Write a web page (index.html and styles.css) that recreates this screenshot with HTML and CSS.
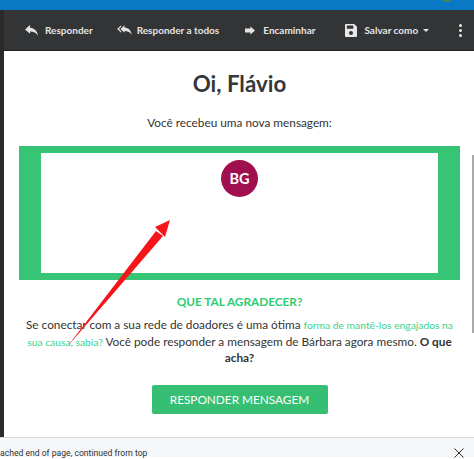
FILE: index.html
```html
<!DOCTYPE html>
<html lang="pt-BR">
<head>
  <meta charset="UTF-8" />
  <title>Oi, Flávio</title>
  <link rel="stylesheet" href="styles.css">
</head>
<body>
  <div class="topbar"><span class="account"></span></div>

  <div class="viewer">
    <div class="toolbar">
      <span class="tool tool-reply">
        <svg class="icon" width="13" height="11" viewBox="0 0 18 15"><path d="M0 6 7 0v3.600c6 .4 10 4.400 11 11-2.500-3.800-6-5.600-11-5.600V12z" fill="#e4e4e4"/></svg>
        Responder
      </span>
      <span class="tool tool-replyall">
        <svg class="icon" width="15" height="10" viewBox="0 0 22 15"><path d="M0 6 6 .5v2.300L2.800 6 6 9.200v2.300z" fill="#e4e4e4"/><path d="M5 6 11 .5v3.100c6 .4 10 4.400 11 11-2.500-3.800-6-5.600-11-5.600v2.500z" fill="#e4e4e4"/></svg>
        Responder a todos
      </span>
      <span class="tool tool-forward">
        <svg class="icon" width="10" height="9" viewBox="0 0 15 12"><path d="M0 3h8V0l7 6-7 6V9H0z" fill="#e4e4e4"/></svg>
        Encaminhar
      </span>
      <span class="tool tool-save">
        <svg class="icon" width="12" height="13" viewBox="0 0 13 14"><path fill-rule="evenodd" d="M1 0h9l3 3v10a1 1 0 0 1-1 1H1a1 1 0 0 1-1-1V1a1 1 0 0 1 1-1zM2 1.500V5h7V1.500zM6.500 7.500a2.200 2.200 0 1 0 0 4.400 2.200 2.200 0 0 0 0-4.400z" fill="#e8e8e8"/></svg>
        Salvar como
        <span class="caret"></span>
      </span>
      <span class="dots"><i></i><i></i><i></i></span>
    </div>

    <div class="mail">
      <h1>Oi, Flávio</h1>
      <p class="intro">Você recebeu uma nova mensagem:</p>

      <div class="message-box">
        <div class="avatar">BG</div>
      </div>

      <h2>QUE TAL AGRADECER?</h2>
      <p class="copy">Se conectar com a sua rede de doadores é uma ótima <a>forma de mantê-los engajados na sua causa, sabia?</a> Você pode responder a mensagem de Bárbara agora mesmo. <b>O que acha?</b></p>

      <div class="cta-row"><span class="cta">RESPONDER MENSAGEM</span></div>
    </div>
    <div class="scroll-thumb"></div>
  </div>

  <div class="findbar">
    <span class="find-text">ached end of page, continued from top</span>
    <svg width="10" height="10" viewBox="0 0 11 11"><path d="M.5.500l10 10M10.500.500l-10 10" stroke="#333" stroke-width="1.100" fill="none"/></svg>
  </div>

  <!-- annotation drawn on top of the screenshot -->
  <svg class="arrow" width="474" height="459" viewBox="0 0 474 459">
    <path d="M67 347 156 231 163 236z" fill="#f5141a"/>
    <path d="M170 220 155 227 165 237z" fill="#f5141a"/>
  </svg>
</body>
</html>
```

FILE: styles.css
```css
html, body {
  margin: 0;
  padding: 0;
}
body {
  position: relative;
  width: 474px;
  height: 459px;
  overflow: hidden;
  background: #fff;
  font-family: Lato, "Open Sans", sans-serif;
  color: #333;
}
.topbar {
  position: relative;
  height: 10px;
  background: #0a78c4;
}
.account {
  position: absolute;
  left: 441px;
  top: -10px;
  width: 12px;
  height: 12px;
  border-radius: 50%;
  background: #4c8a4a;
}
.viewer {
  position: relative;
  height: 427px;
  border-left: 4px solid #2a2a2a;
  box-sizing: border-box;
  overflow: hidden;
}
.toolbar {
  display: flex;
  align-items: center;
  height: 41px;
  background: #333435;
  border-bottom: 1px solid #222;
  box-sizing: border-box;
  color: #e4e4e4;
  font-size: 10px;
  font-weight: 700;
  white-space: nowrap;
}
.tool {
  display: flex;
  align-items: center;
}
.tool-reply { margin-left: 21px; gap: 7px; }
.tool-replyall { margin-left: 24px; gap: 5px; }
.tool-forward { margin-left: 26px; gap: 8px; }
.tool-save { margin-left: 30px; gap: 7px; }
.caret {
  width: 0;
  height: 0;
  margin-left: -2px;
  border-left: 3.500px solid transparent;
  border-right: 3.500px solid transparent;
  border-top: 3.500px solid #e4e4e4;
}
.dots {
  display: flex;
  flex-direction: column;
  gap: 2px;
  margin-left: 30px;
}
.dots i {
  width: 3px;
  height: 3px;
  border-radius: 50%;
  background: #e8e8e8;
}
.mail {
  display: flex;
  flex-direction: column;
  align-items: center;
  width: 471px;
  padding-top: 18px;
  box-sizing: border-box;
  text-align: center;
}
h1 {
  margin: 0;
  font-size: 22.300px;
  line-height: 29px;
  font-weight: 700;
  color: #34373b;
}
.intro {
  margin: 16px 0 0;
  font-size: 11.800px;
  line-height: 17px;
}
.message-box {
  display: flex;
  justify-content: center;
  width: 441px;
  height: 134px;
  margin: 15px 0 0;
  padding-top: 7px;
  border: 7px solid #38c475;
  border-left-width: 22px;
  border-right-width: 22px;
  box-sizing: border-box;
}
.avatar {
  width: 37px;
  height: 37px;
  border-radius: 50%;
  background: #a0104f;
  color: #fff;
  font-size: 14.500px;
  font-weight: 700;
  line-height: 37px;
  text-align: center;
}
h2 {
  margin: 14px 0 0;
  font-size: 11.800px;
  line-height: 16px;
  font-weight: 700;
  color: #2ecc71;
}
.copy {
  width: 430px;
  margin: 7px 0 0;
  font-size: 11.800px;
  line-height: 15.500px;
}
.copy a {
  color: #3dd38a;
  font-size: 10.300px;
}
.cta-row {
  display: flex;
  justify-content: center;
  margin-top: 19.500px;
}
.cta {
  width: 176px;
  height: 29px;
  border-radius: 2px;
  background: #36bf73;
  color: #fff;
  font-size: 11.800px;
  line-height: 29px;
  text-align: center;
}
.scroll-thumb {
  position: absolute;
  right: 0;
  top: 145px;
  width: 2px;
  height: 178px;
  background: #aaa;
}
.findbar {
  display: flex;
  align-items: center;
  justify-content: space-between;
  height: 20px;
  padding: 10px 10px 0 0;
  border-top: 1px solid #d9d9d9;
  background: #f6f7f9;
  box-sizing: border-box;
  font-family: Roboto, sans-serif;
  font-size: 8.600px;
  color: #333;
}
.arrow {
  position: absolute;
  left: 0;
  top: 0;
}
```
